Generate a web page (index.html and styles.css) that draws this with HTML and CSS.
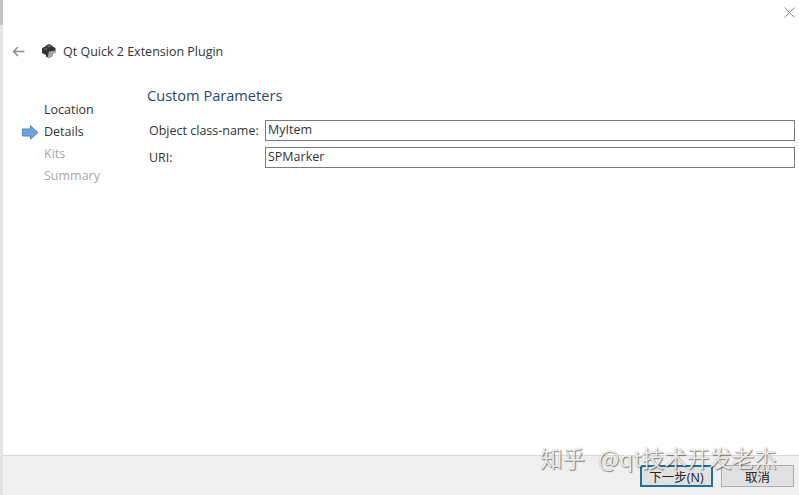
FILE: index.html
```html
<!DOCTYPE html>
<html lang="zh">
<head>
<meta charset="utf-8">
<title>Qt Quick 2 Extension Plugin</title>
<link rel="stylesheet" href="styles.css">
</head>
<body>
<div class="window">
  <div class="topbar">
    <svg class="close" width="11" height="11" viewBox="0 0 11 11"><path d="M.5.5l10 10M10.5.5l-10 10" stroke="#8a8a8a" stroke-width="1" fill="none"/></svg>
  </div>
  <div class="titlebar">
    <svg class="back" width="13" height="11" viewBox="0 0 13 11"><path d="M12.500 5.500H1.500M6 1L1.500 5.500 6 10" stroke="#8c8c8c" stroke-width="1.500" fill="none"/></svg>
    <svg class="plugin" width="16" height="16" viewBox="0 0 16 16">
      <path d="M5 2.500L8 1l3 1.500 1 1.200 2.500 1.300v4.500l-3 1.500V13l-3.500 2-3-1.200V12L1 10V5l3-1.300z" fill="#333"/>
      <path d="M8 8.500l6.500-1v2l-3 1.500V13l-3.500 2-1.500-.6z" fill="#a8a8a8"/>
      <path d="M5.800 3.200L8 2.200l2.200 1L8 4.300z" fill="#808080"/>
      <path d="M2.500 5.800L5 5l2 1-2.300 1z" fill="#6a6a6a"/>
    </svg>
    <span class="title">Qt Quick 2 Extension Plugin</span>
  </div>
  <div class="main">
    <ul class="steps">
      <li class="step done">Location</li>
      <li class="step done current">
        <svg class="arrow" width="17" height="15" viewBox="0 0 17 15"><path d="M.5 4h8V.8l7.500 6.700-7.500 6.700V11h-8z" fill="#6fa3dc" stroke="#4f86c6" stroke-width="1"/></svg>
        Details
      </li>
      <li class="step">Kits</li>
      <li class="step">Summary</li>
    </ul>
    <div class="content">
      <h1 class="heading">Custom Parameters</h1>
      <div class="form">
        <label class="label">Object class-name:</label>
        <div class="field">MyItem</div>
        <label class="label">URI:</label>
        <div class="field">SPMarker</div>
      </div>
    </div>
  </div>
  <div class="footer">
    <button class="btn primary">下一步(N)</button>
    <button class="btn">取消</button>
  </div>
  <div class="watermark">知乎 @qt技术开发老杰</div>
</div>
</body>
</html>
```
FILE: styles.css
```css
* { box-sizing: border-box; }
html, body { margin: 0; height: 100%; }
body {
  background: #fff;
  font-family: "Open Sans", "Noto Sans CJK SC", sans-serif;
  font-size: 12.500px;
  color: #333;
  overflow: hidden;
}
.window {
  position: relative;
  display: flex;
  flex-direction: column;
  height: 495px;
  border-left: 3px solid #e4e4e4;
}
.window::before {
  content: "";
  position: absolute;
  left: -3px;
  top: 0;
  width: 3px;
  height: 25px;
  background: #c4c4c4;
}
.topbar {
  display: flex;
  justify-content: flex-end;
  height: 36px;
  padding: 7px 4px 0 0;
}
.titlebar {
  display: flex;
  align-items: center;
  height: 30px;
  padding-left: 9px;
}
.plugin { margin-left: 16px; }
.title { margin-left: 6px; font-size: 12.500px; color: #333; }
.main { display: flex; flex: 1; padding-top: 19px; }
.steps {
  list-style: none;
  margin: 14px 0 0;
  padding: 0;
  width: 144px;
}
.step {
  position: relative;
  height: 22px;
  line-height: 22px;
  padding-left: 41px;
  color: #a8a8a8;
}
.step.done { color: #333; }
.arrow { position: absolute; left: 19px; top: 4px; }
.content { flex: 1; padding-right: 4px; }
.heading {
  margin: 0 0 15px;
  font-size: 14.600px;
  font-weight: 400;
  line-height: 20px;
  color: #1d4a73;
}
.form {
  display: grid;
  grid-template-columns: 118px 1fr;
  grid-auto-rows: 21px;
  row-gap: 6px;
  align-items: center;
}
.label { padding-left: 2px; color: #333; }
.field {
  height: 21px;
  line-height: 18px;
  padding-left: 2px;
  border: 1px solid #7a7a7a;
  color: #333;
}
.footer {
  display: flex;
  justify-content: flex-end;
  gap: 8px;
  height: 40px;
  padding: 9px 5px 0 0;
  background: #f0f0f0;
  border-top: 1px solid #d8d8d8;
}
.btn {
  width: 73px;
  height: 22px;
  padding: 0;
  font-family: inherit;
  font-size: 12.500px;
  color: #222;
  background: #e1e1e1;
  border: 1px solid #adadad;
}
.btn.primary { border: 2px solid #1f6f9f; }
.watermark {
  position: absolute;
  left: 537px;
  top: 442px;
  font-family: "Noto Sans CJK SC", sans-serif;
  font-size: 22.500px;
  line-height: 30px;
  word-spacing: 8px;
  white-space: nowrap;
  color: rgba(255,255,255,.85);
  text-shadow: 1px 1px 1px rgba(0,0,0,.45), 0 0 1px rgba(0,0,0,.3);
}
```
